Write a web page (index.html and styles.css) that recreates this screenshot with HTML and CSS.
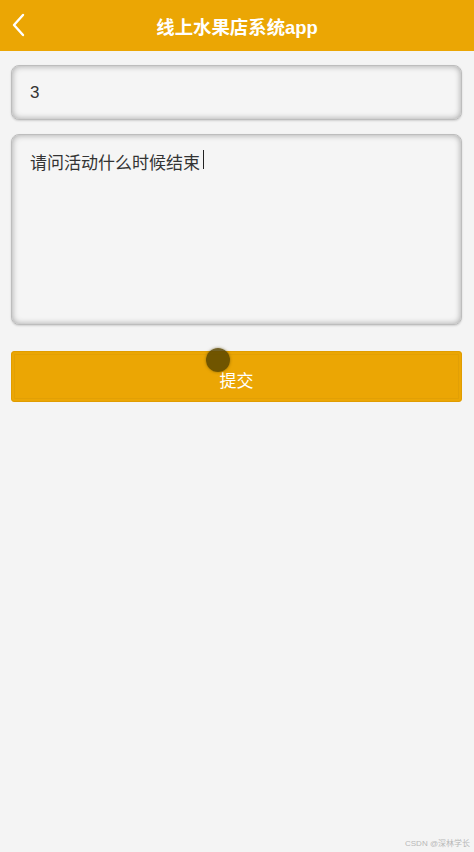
FILE: index.html
```html
<!DOCTYPE html>
<html lang="zh">
<head>
<meta charset="utf-8">
<link rel="stylesheet" href="styles.css">
</head>
<body>
<header class="topbar">
  <span class="back">
    <svg width="14" height="24" viewBox="0 0 14 24"><path d="M12 2 L3 12 L12 22" fill="none" stroke="#fff" stroke-width="2.4" stroke-linecap="round" stroke-linejoin="round"/></svg>
  </span>
  <h1 class="title">线上水果店系统app</h1>
</header>
<main class="form">
  <div class="field single"><span class="val">3</span></div>
  <div class="field area"><span class="val">请问活动什么时候结束</span><span class="caret"></span></div>
  <div class="btn-wrap">
    <button class="submit">提交</button>
    <span class="touch"></span>
  </div>
</main>
<div class="mark">CSDN @深林学长</div>
</body>
</html>
```
FILE: styles.css
```css
* { box-sizing: border-box; }
html, body { margin: 0; padding: 0; }
body {
  width: 474px;
  height: 852px;
  background: #f4f4f4;
  font-family: "Liberation Sans", "Noto Sans CJK SC", sans-serif;
  position: relative;
  overflow: hidden;
}
.topbar {
  height: 51px;
  background: #eba604;
  display: flex;
  align-items: center;
  justify-content: center;
  position: relative;
}
.back {
  position: absolute;
  left: 11px;
  top: 13px;
  display: flex;
}
.title {
  margin: 0;
  color: #fff;
  font-size: 18.4px;
  font-weight: bold;
  letter-spacing: 0;
}
.form {
  padding: 14px 12px 0 11px;
  display: flex;
  flex-direction: column;
}
.field {
  background: #f5f5f5;
  border: 1px solid #bdbdbd;
  border-radius: 8px;
  box-shadow: inset 0 0 6px rgba(0,0,0,0.35), 0 1px 2px rgba(0,0,0,0.15);
  color: #333;
  font-size: 17px;
  padding: 0 18px;
}
.single {
  height: 55px;
  display: flex;
  align-items: center;
}
.area {
  margin-top: 14px;
  height: 191px;
  padding-top: 14px;
  display: flex;
  align-items: flex-start;
}
.caret {
  width: 1px;
  height: 19px;
  background: #222;
  margin-top: 1px;
  margin-left: 3px;
}
.btn-wrap {
  margin-top: 26px;
  position: relative;
}
.submit {
  width: 100%;
  height: 51px;
  background: #eba604;
  border: 1px solid #e09c00;
  border-radius: 3px;
  box-shadow: inset 0 0 0 2px #eba604, inset 0 0 0 3px #e2a005;
  color: #fff;
  font-family: "Liberation Sans", "Noto Sans CJK SC", sans-serif;
  font-size: 17px;
  padding-top: 6px;
  display: block;
}
.touch {
  position: absolute;
  left: 195px;
  top: -3px;
  width: 24px;
  height: 24px;
  border-radius: 50%;
  background: rgba(90, 70, 0, 0.85);
  box-shadow: 0 0 3px rgba(90,70,0,0.6);
}
.mark {
  position: absolute;
  right: 4px;
  bottom: 4px;
  font-size: 8px;
  color: #b8b8b8;
}
```
